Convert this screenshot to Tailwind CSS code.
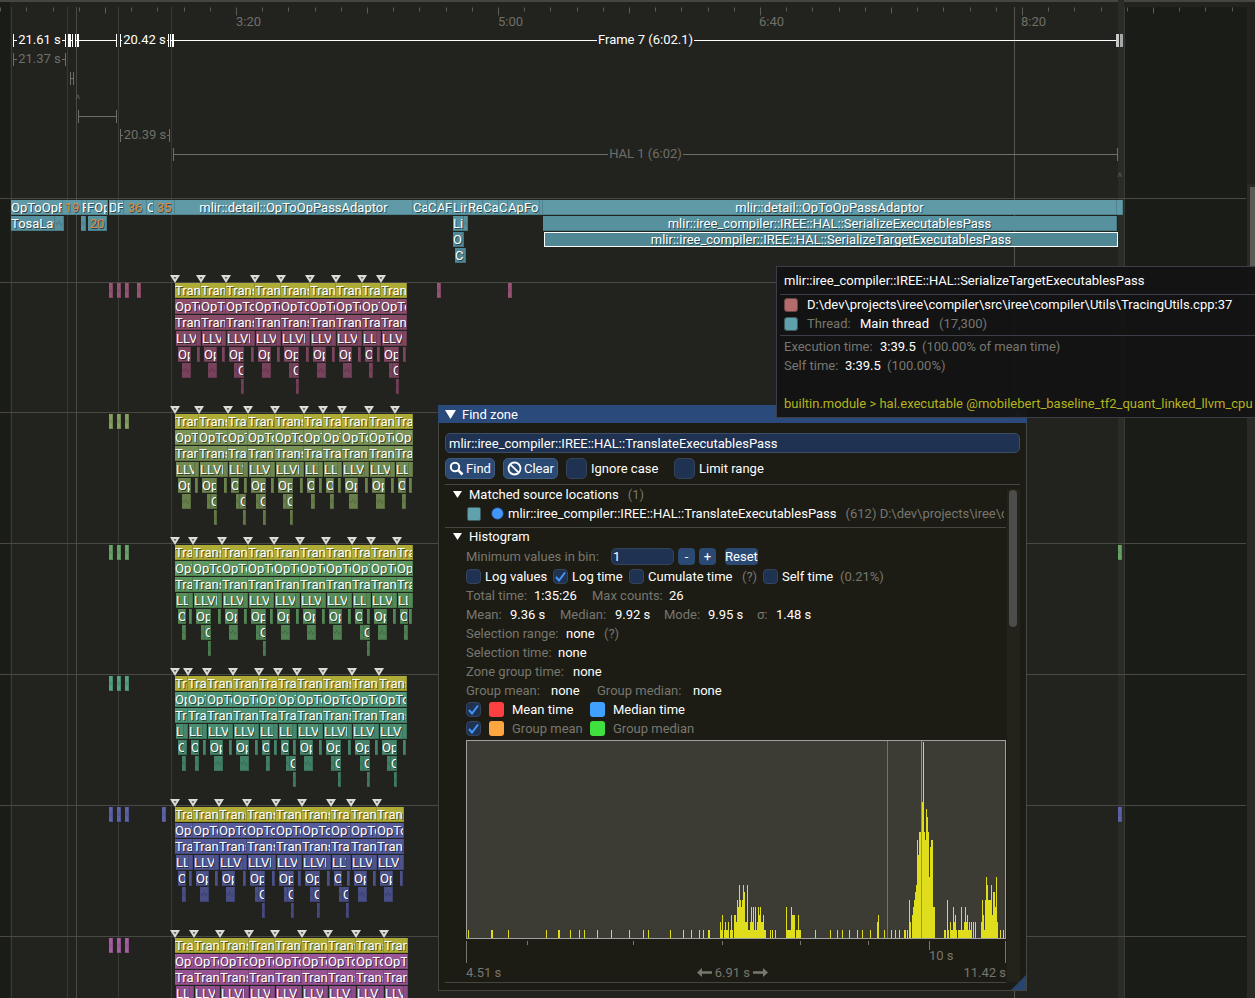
<!DOCTYPE html>
<html>

<head>
    <title>Tracy - Find zone</title>
    <script src="https://cdn.jsdelivr.net/npm/@tailwindcss/browser@4"></script>
</head>

<body class="bg-[#22231e] overflow-hidden">
    <div class="relative w-[1255px] h-[998px] overflow-hidden bg-[#22231e] text-white text-[13px] leading-[19px] font-['Roboto',sans-serif]">

        <!-- timeline canvas, filled in by the script below -->
        <div id="timeline" class="absolute inset-0"></div>

        <!-- find zone window -->
        <div class="absolute left-[438px] top-[405px] w-[589px] h-[586px] flex flex-col bg-[#1c1c14] border border-[#45463f] border-t-0">
            <div class="h-[18px] shrink-0 flex items-center bg-[#2a4a7c] -mx-px">
                <svg class="ml-[7px] w-[11px] h-[9px]" viewBox="0 0 11 9"><polygon points="0,0 11,0 5.5,9" fill="#fff" /></svg>
                <span class="ml-[6px]">Find zone</span>
                <span class="ml-auto mr-[6px] text-white/60">×</span>
            </div>

            <div class="mx-[6px] mt-[10px] h-[20px] shrink-0 flex items-center rounded-[5px] bg-[#1f3252] border border-[#3d4d68] pl-[3px]">mlir::iree_compiler::IREE::HAL::TranslateExecutablesPass</div>

            <div class="mx-[6px] mt-[5px] h-[21px] shrink-0 flex items-center">
                <button class="w-[50px] h-[21px] flex items-center justify-center gap-[2px] rounded-[5px] bg-[#2a4a74] border border-[#3d5a80]">
                    <svg class="w-[15px] h-[15px]" viewBox="0 0 15 15" fill="none" stroke="#fff"><circle cx="6" cy="6" r="4.2" stroke-width="2" /><path d="M9.2 9.2 L13.5 13.5" stroke-width="2.6" /></svg>
                    Find
                </button>
                <button class="ml-[8px] w-[55px] h-[21px] flex items-center justify-center gap-[2px] rounded-[5px] bg-[#2a4a74] border border-[#3d5a80]">
                    <svg class="w-[15px] h-[15px]" viewBox="0 0 15 15" fill="none" stroke="#fff" stroke-width="1.8"><circle cx="7.5" cy="7.5" r="6" /><path d="M3.3 3.3 L11.7 11.7" /></svg>
                    Clear
                </button>
                <span class="ml-[8px] w-[21px] h-[21px] rounded-[5px] bg-[#1f3252] border border-[#35435c]"></span>
                <span class="ml-[4px] w-[83px]">Ignore case</span>
                <span class="w-[21px] h-[21px] rounded-[5px] bg-[#1f3252] border border-[#35435c]"></span>
                <span class="ml-[4px]">Limit range</span>
            </div>

            <div class="mx-[6px] mt-[5px] h-px shrink-0 bg-[#45463f]"></div>

            <div class="flex-1 relative flex flex-col pl-[14px]">
                <!-- scrollbar -->
                <div class="absolute left-[568px] top-[4px] bottom-[8px] w-[13px] bg-[#23231c]">
                    <div class="ml-[2px] mt-[1px] w-[8px] h-[137px] rounded-full bg-[#4c4c4a]"></div>
                </div>

                <div class="h-[19px] flex items-center">
                    <svg class="w-[9px] h-[7px]" viewBox="0 0 9 7"><polygon points="0,0 9,0 4.5,7" fill="#fff" /></svg>
                    <span class="ml-[7px]">Matched source locations</span>
                    <span class="ml-[9px] text-[#77776f]">(1)</span>
                </div>
                <div class="h-[19px] flex items-center whitespace-nowrap overflow-hidden w-[551px]">
                    <span class="w-[14px] h-[14px] ml-[14px] shrink-0 rounded-[2px] bg-[#5fa2ae] border border-[#3d5a60]"></span>
                    <span class="w-[13px] h-[13px] ml-[10px] shrink-0 rounded-full bg-[#4296fa] border border-[#1f3252]"></span>
                    <span class="ml-[4px] shrink-0">mlir::iree_compiler::IREE::HAL::TranslateExecutablesPass</span>
                    <span class="ml-[9px] text-[#77776f]">(612) D:\dev\projects\iree\compiler\src</span>
                </div>
                <div class="-ml-[8px] mt-[4px] w-[561px] h-px shrink-0 bg-[#45463f]"></div>

                <div class="h-[18px] flex items-center pb-[1px]">
                    <svg class="w-[9px] h-[7px]" viewBox="0 0 9 7"><polygon points="0,0 9,0 4.5,7" fill="#fff" /></svg>
                    <span class="ml-[7px]">Histogram</span>
                </div>

                <div class="pl-[13px] flex flex-col w-[553px]">
                    <div class="h-[20px] flex items-center whitespace-nowrap">
                        <span class="w-[145px] text-[#77776f]">Minimum values in bin:</span>
                        <span class="w-[63px] h-[17px] rounded-[5px] bg-[#1f3252] border border-[#35435c] pl-[1px] flex items-center">1</span>
                        <span class="ml-[4px] w-[17px] h-[17px] rounded-[4px] bg-[#2a4a74] flex items-center justify-center">-</span>
                        <span class="ml-[4px] w-[17px] h-[17px] rounded-[4px] bg-[#2a4a74] flex items-center justify-center">+</span>
                        <span class="ml-[9px] w-[33px] h-[17px] rounded-[4px] bg-[#2a4a74] flex items-center justify-center">Reset</span>
                    </div>
                    <div class="h-[20px] flex items-center whitespace-nowrap">
                        <span class="w-[15px] h-[15px] rounded-[4px] bg-[#1f3252] border border-[#35435c]"></span>
                        <span class="ml-[4px] w-[68px]">Log values</span>
                        <span class="w-[15px] h-[15px] rounded-[4px] bg-[#1f3252] border border-[#35435c] flex items-center justify-center">
                            <svg class="w-[11px] h-[11px]" viewBox="0 0 11 11" fill="none" stroke="#4296fa" stroke-width="2"><path d="M1 6 L4 9.5 L10 1.5" /></svg>
                        </span>
                        <span class="ml-[4px] w-[57px]">Log time</span>
                        <span class="w-[15px] h-[15px] rounded-[4px] bg-[#1f3252] border border-[#35435c]"></span>
                        <span class="ml-[4px] w-[94px]">Cumulate time</span>
                        <span class="w-[21px] text-[#77776f]">(?)</span>
                        <span class="w-[15px] h-[15px] rounded-[4px] bg-[#1f3252] border border-[#35435c]"></span>
                        <span class="ml-[4px] w-[58px]">Self time</span>
                        <span class="text-[#77776f]">(0.21%)</span>
                    </div>
                    <div class="h-[19px] flex items-center whitespace-nowrap">
                        <span class="w-[68px] text-[#77776f]">Total time:</span><span class="w-[58px]">1:35:26</span>
                        <span class="w-[77px] text-[#77776f]">Max counts:</span><span>26</span>
                    </div>
                    <div class="h-[19px] flex items-center whitespace-nowrap">
                        <span class="w-[44px] text-[#77776f]">Mean:</span><span class="w-[50px]">9.36 s</span>
                        <span class="w-[55px] text-[#77776f]">Median:</span><span class="w-[49px]">9.92 s</span>
                        <span class="w-[44px] text-[#77776f]">Mode:</span><span class="w-[49px]">9.95 s</span>
                        <span class="w-[19px] text-[#77776f]">σ:</span><span>1.48 s</span>
                    </div>
                    <div class="h-[19px] flex items-center whitespace-nowrap">
                        <span class="w-[100px] text-[#77776f]">Selection range:</span><span class="w-[38px]">none</span>
                        <span class="text-[#77776f]">(?)</span>
                    </div>
                    <div class="h-[19px] flex items-center whitespace-nowrap">
                        <span class="w-[92px] text-[#77776f]">Selection time:</span><span>none</span>
                    </div>
                    <div class="h-[19px] flex items-center whitespace-nowrap">
                        <span class="w-[107px] text-[#77776f]">Zone group time:</span><span>none</span>
                    </div>
                    <div class="h-[19px] flex items-center whitespace-nowrap">
                        <span class="w-[85px] text-[#77776f]">Group mean:</span><span class="w-[46px]">none</span>
                        <span class="w-[96px] text-[#77776f]">Group median:</span><span>none</span>
                    </div>
                    <div class="h-[19px] flex items-center whitespace-nowrap">
                        <span class="w-[15px] h-[15px] rounded-[4px] bg-[#1f3252] border border-[#35435c] flex items-center justify-center">
                            <svg class="w-[11px] h-[11px]" viewBox="0 0 11 11" fill="none" stroke="#4296fa" stroke-width="2"><path d="M1 6 L4 9.5 L10 1.5" /></svg>
                        </span>
                        <span class="ml-[8px] w-[15px] h-[15px] rounded-[3px] bg-[#ff4040]"></span>
                        <span class="ml-[8px] w-[78px]">Mean time</span>
                        <span class="w-[15px] h-[15px] rounded-[3px] bg-[#40a0ff]"></span>
                        <span class="ml-[8px]">Median time</span>
                    </div>
                    <div class="h-[19px] flex items-center whitespace-nowrap">
                        <span class="w-[15px] h-[15px] rounded-[4px] bg-[#1f3252] border border-[#35435c] flex items-center justify-center">
                            <svg class="w-[11px] h-[11px]" viewBox="0 0 11 11" fill="none" stroke="#4296fa" stroke-width="2"><path d="M1 6 L4 9.5 L10 1.5" /></svg>
                        </span>
                        <span class="ml-[8px] w-[15px] h-[15px] rounded-[3px] bg-[#ffa640]"></span>
                        <span class="ml-[8px] w-[78px] text-[#77776f]">Group mean</span>
                        <span class="w-[15px] h-[15px] rounded-[3px] bg-[#40e040]"></span>
                        <span class="ml-[8px] text-[#77776f]">Group median</span>
                    </div>

                    <!-- histogram plot -->
                    <svg id="plot" class="mt-[2px] block" width="540" height="199" viewBox="0 0 540 199"></svg>
                    <div class="relative h-[25px] w-[540px]">
                        <svg id="axis" class="block" width="540" height="25" viewBox="0 0 540 25"></svg>
                        <span class="absolute left-[463px] top-[7px] text-[#77776f]">10 s</span>
                    </div>
                    <div class="h-[16px] w-[540px] flex items-center justify-between whitespace-nowrap text-[#77776f]">
                        <span>4.51 s</span>
                        <span class="flex items-center gap-[3px]">
                            <svg class="w-[15px] h-[9px]" viewBox="0 0 15 9" fill="#77776f"><path d="M0 4.5 L5 0 V3.2 H15 V5.8 H5 V9 Z" /></svg>
                            6.91 s
                            <svg class="w-[15px] h-[9px]" viewBox="0 0 15 9" fill="#77776f"><path d="M15 4.5 L10 0 V3.2 H0 V5.8 H10 V9 Z" /></svg>
                        </span>
                        <span>11.42 s</span>
                    </div>
                </div>
                <div class="-ml-[8px] mt-[2px] w-[561px] h-px shrink-0 bg-[#45463f]"></div>

                <svg class="absolute right-0 bottom-0 w-[15px] h-[15px]" viewBox="0 0 15 15"><polygon points="15,0 15,15 0,15" fill="#27446e" /></svg>
            </div>
        </div>

        <!-- zone tooltip -->
        <div class="absolute left-[776px] top-[266px] w-[479px] h-[152px] bg-[#131313]/95 border border-[#3e3e48] border-r-0 pl-[7px] whitespace-nowrap">
            <div class="h-[27px] flex items-center">mlir::iree_compiler::IREE::HAL::SerializeTargetExecutablesPass</div>
            <div class="-ml-[4px] h-px bg-[#3e3e48]"></div>
            <div class="h-[19px] mt-[0px] flex items-center">
                <span class="w-[14px] h-[14px] rounded-[3px] bg-[#b36b6b] border border-[#6b4545]"></span>
                <span class="ml-[9px]">D:\dev\projects\iree\compiler\src\iree\compiler\Utils\TracingUtils.cpp:37</span>
            </div>
            <div class="h-[19px] flex items-center">
                <span class="w-[14px] h-[14px] rounded-[3px] bg-[#5fa2ae] border border-[#3d5a60]"></span>
                <span class="ml-[9px] w-[53px] text-[#77776f]">Thread:</span>
                <span class="w-[79px]">Main thread</span>
                <span class="text-[#77776f]">(17,300)</span>
            </div>
            <div class="-ml-[4px] mt-[2px] h-px bg-[#3e3e48]"></div>
            <div class="h-[19px] mt-[1px] flex items-center">
                <span class="w-[96px] text-[#77776f]">Execution time:</span>
                <span class="w-[42px]">3:39.5</span>
                <span class="text-[#77776f]">(100.00% of mean time)</span>
            </div>
            <div class="h-[19px] flex items-center">
                <span class="w-[61px] text-[#77776f]">Self time:</span>
                <span class="w-[42px]">3:39.5</span>
                <span class="text-[#77776f]">(100.00%)</span>
            </div>
            <div class="h-[19px]"></div>
            <div class="h-[19px] flex items-center text-[#b4b41e]">builtin.module &gt; hal.executable @mobilebert_baseline_tf2_quant_linked_llvm_cpu</div>
        </div>
    </div>

    <script>
        const timeline = document.getElementById('timeline');
        let html = '';

        // background bands and lines
        function rect(x, y, w, h, color) {
            html += `<div class="absolute" style="left:${x}px;top:${y}px;width:${w}px;height:${h}px;background:${color}"></div>`;
        }
        rect(0, 0, 10, 998, '#1a1c18');
        rect(1124, 7, 123, 991, '#1a1c18');
        rect(0, 0, 1255, 2, '#45453f');
        rect(1118, 0, 6, 998, '#2b2c27');

        [[11, '#393a35'], [67, '#393a35'], [76, '#4a4b46'], [118, '#393a35'], [171, '#393a35'], [1014, '#55564f'], [1124, '#393a35']].forEach(([x, c]) => rect(x, 7, 1, 991, c));
        [198, 282, 412, 543, 674, 805, 936].forEach(y => rect(0, y, 1246, 1, '#484943'));
        rect(1247, 184, 8, 814, '#2a2b26');
        rect(1250, 187, 5, 84, '#5a5a58');

        // ruler
        let ruler = '';
        for (let k = -9; k < 40; k++) {
            const x = Math.round(236 + k * 26.2) + 0.5;
            const len = k % 10 === 0 ? 8 : (k + 100) % 5 === 0 ? 6 : 4;
            ruler += `M${x} 7.5V${7.5 + len}`;
        }
        html += `<svg class="absolute left-0 top-0" width="1247" height="20"><path d="${ruler}" stroke="#5c5c56" fill="none" /></svg>`;
        [[236, '3:20'], [498, '5:00'], [759, '6:40'], [1021, '8:20']].forEach(([x, t]) => {
            html += `<span class="absolute text-[#6f6f69]" style="left:${x}px;top:12px">${t}</span>`;
        });

        // frame and zone brackets
        function bracket(x1, x2, y, label, white) {
            const c = white ? 'text-white' : 'text-[#6f6f69]';
            const line = '<span class="flex-1 h-px bg-current"></span>';
            const tick = '<span class="w-px h-[13px] bg-current"></span>';
            html += `<div class="absolute flex items-center h-[19px] whitespace-nowrap ${c}" style="left:${x1}px;top:${y - 9}px;width:${x2 - x1}px">${tick}${line}${label ? `<span class="px-[1px] -translate-y-px">${label}</span>${line}` : ''}${tick}</div>`;
        }
        bracket(13, 66, 40, '21.61 s', true);
        bracket(68, 70, 40, '', true);
        bracket(70, 73, 40, '', true);
        bracket(75, 78, 40, '', true);
        bracket(78, 117, 40, '', true);
        bracket(120, 169, 40, '20.42 s', true);
        bracket(170, 173, 40, '', true);
        bracket(173, 1118, 40, 'Frame 7 (6:02.1)', true);
        rect(1116, 34, 3, 13, '#c8c8c8');
        rect(1120, 34, 3, 13, '#a8a8a8');
        bracket(13, 66, 59, '21.37 s');
        bracket(70, 74, 78, '');
        bracket(78, 117, 116, '');
        bracket(120, 170, 135, '20.39 s');
        bracket(173, 1118, 154, 'HAL 1 (6:02)');
        html += '<span class="absolute text-[#55554f]" style="left:75px;top:90px">^</span>';
        html += '<span class="absolute text-[#55554f]" style="left:1117px;top:168px">^</span>';

        // zones
        function zone(x1, x2, y, color, text, kind) {
            const zig = kind === 'zig' ? '<svg class="block w-full h-full" viewBox="0 0 12 13" preserveAspectRatio="none"><polyline points="1,6 3,8 6,5 9,9 11,6" fill="none" stroke="rgba(0,0,0,.18)" /></svg>' : '';
            const num = kind === 'num' ? 'text-[#e08a3c] justify-center' : 'text-white';
            const center = kind === 'center' ? 'justify-center' : '';
            html += `<div class="absolute h-[15px] flex overflow-hidden whitespace-nowrap border-b border-r border-black/15 leading-[16px] [text-shadow:1px_1px_0_rgba(0,0,0,.55)] ${num} ${center}" style="left:${x1}px;top:${y}px;width:${x2 - x1}px;background:${color}">${zig}${text}</div>`;
        }

        const teal = '#5f9aa6', teal2 = '#56919d', teal3 = '#4f8794';
        [[11, 63, 'OpToOpPass'], [63, 82, '19', 'num'], [82, 87, 'F'], [87, 108, 'FOpTo'], [109, 117, 'DF'], [117, 124, 'F'], [124, 147, '36', 'num'],
         [147, 154, 'C'], [154, 175, '35', 'num'], [175, 413, 'mlir::detail::OpToOpPassAdaptor', 'center'], [413, 428, 'CaCa'], [428, 437, 'CaC'], [437, 445, 'AF'], [445, 453, 'Fo'],
         [453, 468, 'LirRe'], [468, 483, 'Rem'], [483, 499, 'CaCa'], [499, 508, 'Ca'], [508, 524, 'ApA'], [524, 540, 'Fold'], [540, 543, ''], [543, 1117, 'mlir::detail::OpToOpPassAdaptor', 'center'], [1117, 1123, '']
        ].forEach(([a, b, t, k]) => zone(a, b, 200, teal, t, k));
        zone(11, 55, 216, teal2, 'TosaLayerwise');
        zone(55, 64, 216, teal2, '', 'zig');
        zone(81, 86, 216, teal2, '', 'zig');
        zone(88, 107, 216, teal2, '20', 'num');
        zone(453, 464, 216, teal2, 'Lin');
        zone(464, 468, 216, teal2, '', 'zig');
        zone(453, 464, 232, teal3, 'O');
        zone(455, 466, 248, teal3, 'C');
        zone(543, 1117, 216, teal2, 'mlir::iree_compiler::IREE::HAL::SerializeExecutablesPass', 'center');
        html += `<div class="absolute h-[15px] flex justify-center whitespace-nowrap border border-white leading-[14px] text-white [text-shadow:1px_1px_0_rgba(0,0,0,.55)]" style="left:544px;top:232px;width:574px;background:${teal3}">mlir::iree_compiler::IREE::HAL::SerializeTargetExecutablesPass</div>`;

        // one thread lane with its repeated pass stack
        function shade(rgb, f) {
            return `rgb(${rgb.map(v => Math.round(v * f)).join(',')})`;
        }
        function thread(base, rgb, bounds, deep, marks) {
            marks.forEach(x => zone(x, x + 4, base, shade(rgb, 1.08), '', 'zig'));
            for (let i = 0; i < bounds.length - 1; i++) {
                const a = bounds[i], b = bounds[i + 1], small = b - a < 22;
                html += `<svg class="absolute" style="left:${a - 5}px;top:${base - 8}px" width="10" height="8"><polygon points="0,0 10,0 5,8" fill="#dcdcd8" /><polygon points="3.5,2 6.5,2 5,4.5" fill="#66665f" /></svg>`;
                zone(a, b, base, '#aeac36', 'TranslateTargetExecutableVariantsPass');
                zone(a, b, base + 16, shade(rgb, 1), 'OpToOpPassAdaptor');
                zone(a, b, base + 32, shade(rgb, 0.97), 'TranslateTargetExecutableVariantsPass');
                zone(a + 1, b - 4, base + 48, shade(rgb, 0.93), 'LLVMCPULowerExecutable');
                zone(b - 4, b, base + 48, shade(rgb, 0.9), '');
                if (base + 64 > 998) continue;
                const opEnd = a + (small ? 11 : deep.includes(i) ? 18 : 16);
                zone(a + 3, opEnd, base + 64, shade(rgb, 0.88), 'OpToOpPass');
                zone(b - 4, b - 1, base + 64, shade(rgb, 0.88), '');
                if (deep.includes(i)) {
                    zone(a + 8, a + 12, base + 80, shade(rgb, 0.85), '', 'zig');
                    zone(a + 12, a + 18, base + 80, shade(rgb, 0.85), 'C');
                    zone(a + 15, a + 18, base + 96, shade(rgb, 0.82), '', 'zig');
                } else {
                    zone(a + 7, small ? a + 11 : a + 16, base + 80, shade(rgb, 0.85), '', 'zig');
                }
            }
        }
        thread(283, [140, 78, 108], [175, 201, 226, 255, 281, 310, 336, 362, 381, 407], [2, 4, 8], [109, 117, 125, 137, 437, 508]);
        thread(414, [122, 148, 88], [175, 199, 228, 248, 275, 304, 323, 342, 369, 395, 413], [1, 2, 3, 4], [109, 117, 125]);
        thread(545, [94, 152, 96], [175, 193, 222, 248, 274, 300, 326, 352, 371, 397, 413], [1, 3, 7], [109, 117, 125, 1118]);
        thread(676, [78, 150, 120], [175, 188, 207, 233, 259, 278, 297, 323, 352, 379, 407], [5, 7, 8, 9], [109, 117, 125]);
        thread(807, [86, 92, 155], [175, 193, 219, 247, 276, 302, 331, 351, 377, 404], [3, 4, 5, 6], [109, 117, 125, 162, 1118]);
        thread(938, [154, 86, 150], [175, 194, 220, 249, 275, 302, 328, 356, 384, 408], [], [109, 117, 125]);

        timeline.innerHTML = html;

        // histogram: [start x on screen, heights of consecutive one pixel bins]
        const bins = [
            [468, [8]], [491, [8, 8]], [508, [8]], [546, [8]], [558, [8, 8]], [570, [8]], [579, [8]], [584, [8]], [597, [8]], [611, [8]], [629, [8]], [643, [8]], [648, [8]],
            [670, [8]], [683, [8]], [691, [8]], [699, [8]], [703, [8]], [708, [8, 8]],
            [720, [16, 8, 23, 0, 8, 16, 8, 8, 16, 0, 8, 23, 8, 0, 23, 23, 16, 38, 31, 53, 38, 31, 38, 53, 46, 16, 16, 53, 8, 8, 16, 31, 16, 31, 8, 31, 8, 16, 31, 23, 31, 16, 16, 23, 8, 8]],
            [770, [8]], [772, [8]], [775, [8]],
            [786, [31, 8, 8, 8, 8, 31, 23, 23, 23, 0, 8, 8, 23, 8, 8]],
            [815, [8]], [830, [8]], [837, [8]], [842, [8]], [849, [8]], [857, [8]], [862, [8]], [870, [8]], [877, [16, 23]], [884, [8]], [891, [8]], [895, [8]], [899, [8]], [904, [8, 8]], [907, [8]],
            [909, [38, 16, 0, 23, 31, 38, 46, 53, 98, 83, 106, 106, 129, 136, 196, 106, 98, 129, 121, 106, 61, 91, 98, 98, 31, 31]],
            [944, [8, 8, 0, 38, 8, 0, 16, 8, 8, 31, 16, 23, 8, 0, 8, 8, 8, 31, 8, 8, 16, 31, 16, 23, 8, 16, 8, 16, 0, 16, 0, 16]],
            [981, [16, 38, 23, 8, 38, 61, 53, 38, 38, 38, 53, 23, 46, 46, 31, 61, 16]],
            [1000, [8]], [1003, [8]]
        ];
        let bars = '';
        bins.forEach(([start, heights]) => heights.forEach((h, i) => {
            if (h) bars += `M${start + i - 466} 198v${-h}h1v${h}z`;
        }));
        document.getElementById('plot').innerHTML =
            `<rect width="540" height="199" fill="#3c3c35" />` +
            `<path d="${bars}" fill="#e0de1c" />` +
            `<rect x="421" y="1" width="1" height="197" fill="#ff4848" opacity=".8" />` +
            `<rect x="455" y="1" width="1" height="197" fill="#40a0ff" />` +
            `<rect x="0.5" y="0.5" width="539" height="198" fill="none" stroke="#a0a09c" />`;

        document.getElementById('axis').innerHTML =
            [[0, 22], [61, 4], [167, 4], [256, 4], [334, 4], [402, 4], [463, 9], [539, 22]]
                .map(([x, h]) => `<rect x="${x}" y="2" width="1" height="${h}" fill="#77776f" />`).join('');
    </script>
</body>

</html>
